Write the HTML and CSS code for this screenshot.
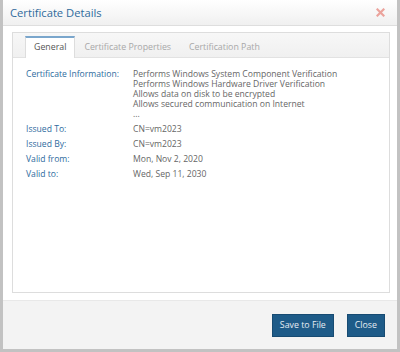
FILE: index.html
```html
<!DOCTYPE html>
<html lang="en">
<head>
  <meta charset="UTF-8">
  <title>Certificate Details</title>
  <link rel="stylesheet" href="styles.css">
</head>
<body>

  <div class="dialog">
    <!-- Header -->
    <div class="dialog-header">
      <h1 class="dialog-title">Certificate Details</h1>
      <span class="close-icon">
        <svg width="9" height="9" viewBox="0 0 9 9">
          <path d="M1.5 1.5 L7.5 7.5 M7.5 1.5 L1.5 7.5" stroke="#eba39c" stroke-width="2.2" stroke-linecap="square"/>
        </svg>
      </span>
    </div>

    <!-- Body -->
    <div class="dialog-body">
      <div class="panel">
        <div class="tabs">
          <div class="tab active">General</div>
          <div class="tab">Certificate Properties</div>
          <div class="tab">Certification Path</div>
        </div>
        <div class="tab-content">
          <div class="info-row">
            <div class="label">Certificate Information:</div>
            <div class="value">
              <p>Performs Windows System Component Verification</p>
              <p>Performs Windows Hardware Driver Verification</p>
              <p>Allows data on disk to be encrypted</p>
              <p>Allows secured communication on Internet</p>
              <p>...</p>
            </div>
          </div>
          <div class="row">
            <div class="label">Issued To:</div>
            <div class="value">CN=vm2023</div>
          </div>
          <div class="row">
            <div class="label">Issued By:</div>
            <div class="value">CN=vm2023</div>
          </div>
          <div class="row">
            <div class="label">Valid from:</div>
            <div class="value">Mon, Nov 2, 2020</div>
          </div>
          <div class="row">
            <div class="label">Valid to:</div>
            <div class="value">Wed, Sep 11, 2030</div>
          </div>
        </div>
      </div>
    </div>

    <!-- Footer -->
    <div class="dialog-footer">
      <button class="button">Save to File</button>
      <button class="button">Close</button>
    </div>
  </div>

</body>
</html>
```

FILE: styles.css
```css
body {
  margin: 0;
  padding: 0;
  background-color: #c2c2c2;
  font-family: "Open Sans", Arial, sans-serif;
}
.dialog {
  margin: 0 3px;
  height: 349px;
  background-color: #fff;
  display: flex;
  flex-direction: column;
}
.dialog-header {
  height: 25px;
  padding: 0 10px 0 7px;
  background: linear-gradient(#ffffff, #f0f0f0);
  border-bottom: 1px solid #dedede;
  display: flex;
  align-items: center;
  justify-content: space-between;
}
.dialog-title {
  margin: 0;
  font-size: 11.2px;
  font-weight: normal;
  color: #2f6b9c;
}
.close-icon {
  display: flex;
  margin-right: 2px;
}
.dialog-body {
  flex: 1;
  padding: 6px 7px 7px 9px;
  display: flex;
}
.panel {
  flex: 1;
  border: 1px solid #dddddd;
  display: flex;
  flex-direction: column;
}
.tabs {
  height: 24px;
  background: linear-gradient(#f7f7f7, #f0f0f0);
  border-bottom: 1px solid #e2e2e2;
  padding-left: 12px;
  display: flex;
  align-items: flex-end;
}
.tab {
  height: 21px;
  padding: 0 8px 0 8px;
  font-size: 8.8px;
  line-height: 19px;
  color: #a8a8a8;
  border-top: 2px solid transparent;
  border-left: 1px solid transparent;
  border-right: 1px solid transparent;
  box-sizing: border-box;
}
.tab.active {
  background-color: #fff;
  color: #555;
  border-top: 2px solid #7aa6cc;
  border-left: 1px solid #dddddd;
  border-right: 1px solid #dddddd;
  margin-bottom: -1px;
  height: 22px;
}
.tab-content {
  padding: 11px 0 0 13px;
  font-size: 8.6px;
}
.info-row, .row {
  display: grid;
  grid-template-columns: 107px 1fr;
}
.info-row {
  line-height: 10px;
  margin-bottom: 3px;
}
.row {
  line-height: 15px;
}
.label {
  color: #2e6b9e;
}
.value {
  color: #666;
}
.value p {
  margin: 0;
}
.dialog-footer {
  height: 48px;
  background-color: #f3f3f3;
  border-top: 1px solid #e8e8e8;
  padding: 0 12px 0 0;
  display: flex;
  align-items: center;
  justify-content: flex-end;
  gap: 13px;
}
.button {
  background-color: #1e5b88;
  border: 1px solid #174b72;
  color: #e6edf3;
  font-family: "Open Sans", Arial, sans-serif;
  font-size: 8.8px;
  height: 23px;
  padding: 0 7px;
  cursor: pointer;
}
```
